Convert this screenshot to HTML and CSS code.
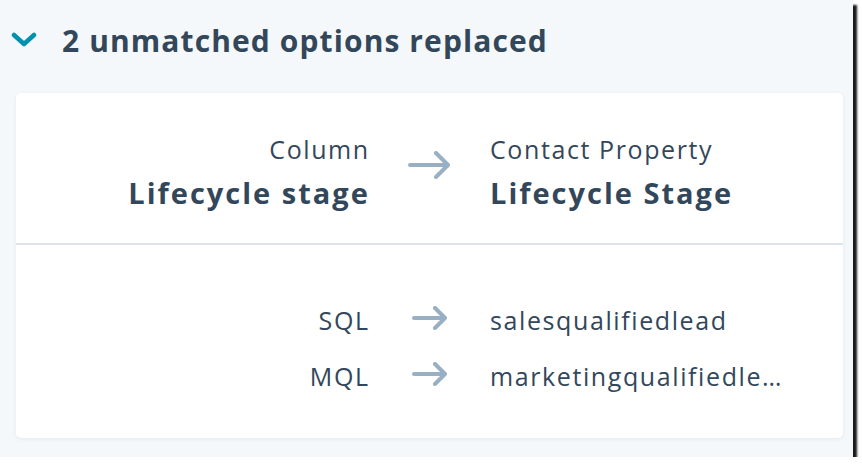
FILE: index.html
```html
<!DOCTYPE html>
<html>
<head>
<meta charset="utf-8">
<link rel="stylesheet" href="styles.css">
</head>
<body>
<div class="window">
  <div class="header">
    <svg class="chevron" width="26" height="16" viewBox="0 0 26 16"><path d="M3 3 L13 12 L23 3" fill="none" stroke="#0091ae" stroke-width="4.5" stroke-linecap="round" stroke-linejoin="round"/></svg>
    <h2 class="title">2 unmatched options replaced</h2>
  </div>
  <div class="card">
    <div class="mapping head">
      <div class="side left">
        <div class="label">Column</div>
        <div class="name">Lifecycle stage</div>
      </div>
      <svg class="arrow big" width="42" height="28" viewBox="0 0 42 28"><path d="M2 14 H40 M28 2 L40 14 L28 26" fill="none" stroke="#99afc4" stroke-width="4" stroke-linecap="round" stroke-linejoin="round"/></svg>
      <div class="side right">
        <div class="label">Contact Property</div>
        <div class="name">Lifecycle Stage</div>
      </div>
    </div>
    <div class="rows">
      <div class="mapping row">
        <div class="value left">SQL</div>
        <svg class="arrow" width="35" height="24" viewBox="0 0 35 24"><path d="M2 12 H33 M23 2 L33 12 L23 22" fill="none" stroke="#99afc4" stroke-width="4" stroke-linecap="round" stroke-linejoin="round"/></svg>
        <div class="value right">salesqualifiedlead</div>
      </div>
      <div class="mapping row">
        <div class="value left">MQL</div>
        <svg class="arrow" width="35" height="24" viewBox="0 0 35 24"><path d="M2 12 H33 M23 2 L33 12 L23 22" fill="none" stroke="#99afc4" stroke-width="4" stroke-linecap="round" stroke-linejoin="round"/></svg>
        <div class="value right trunc">marketingqualifiedlead</div>
      </div>
    </div>
  </div>
</div>
</body>
</html>
```
FILE: styles.css
```css
html, body {
  margin: 0;
  padding: 0;
  background: #ffffff;
}
body {
  font-family: "Open Sans", "Lato", sans-serif;
  color: #33475b;
}
.window {
  width: 853px;
  height: 457px;
  background: #f5f8fa;
  box-shadow: 4px 5px 2px rgba(0, 0, 0, 0.9);
  box-sizing: border-box;
  padding-top: 21px;
}
.header {
  display: flex;
  align-items: center;
  padding-left: 11px;
  height: 40px;
}
.chevron {
  flex: none;
  margin-right: 25px;
  margin-top: -2px;
}
.title {
  margin: 0;
  font-size: 30px;
  font-weight: 700;
  letter-spacing: 1.1px;
  line-height: 40px;
}
.card {
  margin: 32px 10px 0 16px;
  background: #ffffff;
  border-radius: 5px;
  box-shadow: 0 1px 4px rgba(45, 62, 80, 0.08);
  height: 345px;
  box-sizing: border-box;
}
.mapping {
  display: grid;
  grid-template-columns: 352px 122px 1fr;
  align-items: center;
}
.head {
  height: 152px;
  border-bottom: 2px solid #dfe3eb;
  box-sizing: border-box;
  padding-top: 11px;
}
.side.left { text-align: right; margin-right: -1.8px; }
.side.right { text-align: left; }
.label {
  font-size: 25px;
  line-height: 36px;
  font-weight: 400;
  letter-spacing: 1.6px;
}
.name {
  margin-top: 3px;
  font-size: 29px;
  font-weight: 700;
  line-height: 46px;
  letter-spacing: 2px;
}
.arrow { justify-self: center; margin-top: -4px; }
.arrow.big { margin-top: -17px; }
.rows {
  padding-top: 47px;
}
.row {
  height: 56px;
}
.value {
  font-size: 25px;
  line-height: 36px;
  letter-spacing: 1.6px;
}
.value.left { text-align: right; margin-right: -1.6px; }
.value.right {
  white-space: nowrap;
  overflow: hidden;
  text-overflow: ellipsis;
  max-width: 292px;
}
```
